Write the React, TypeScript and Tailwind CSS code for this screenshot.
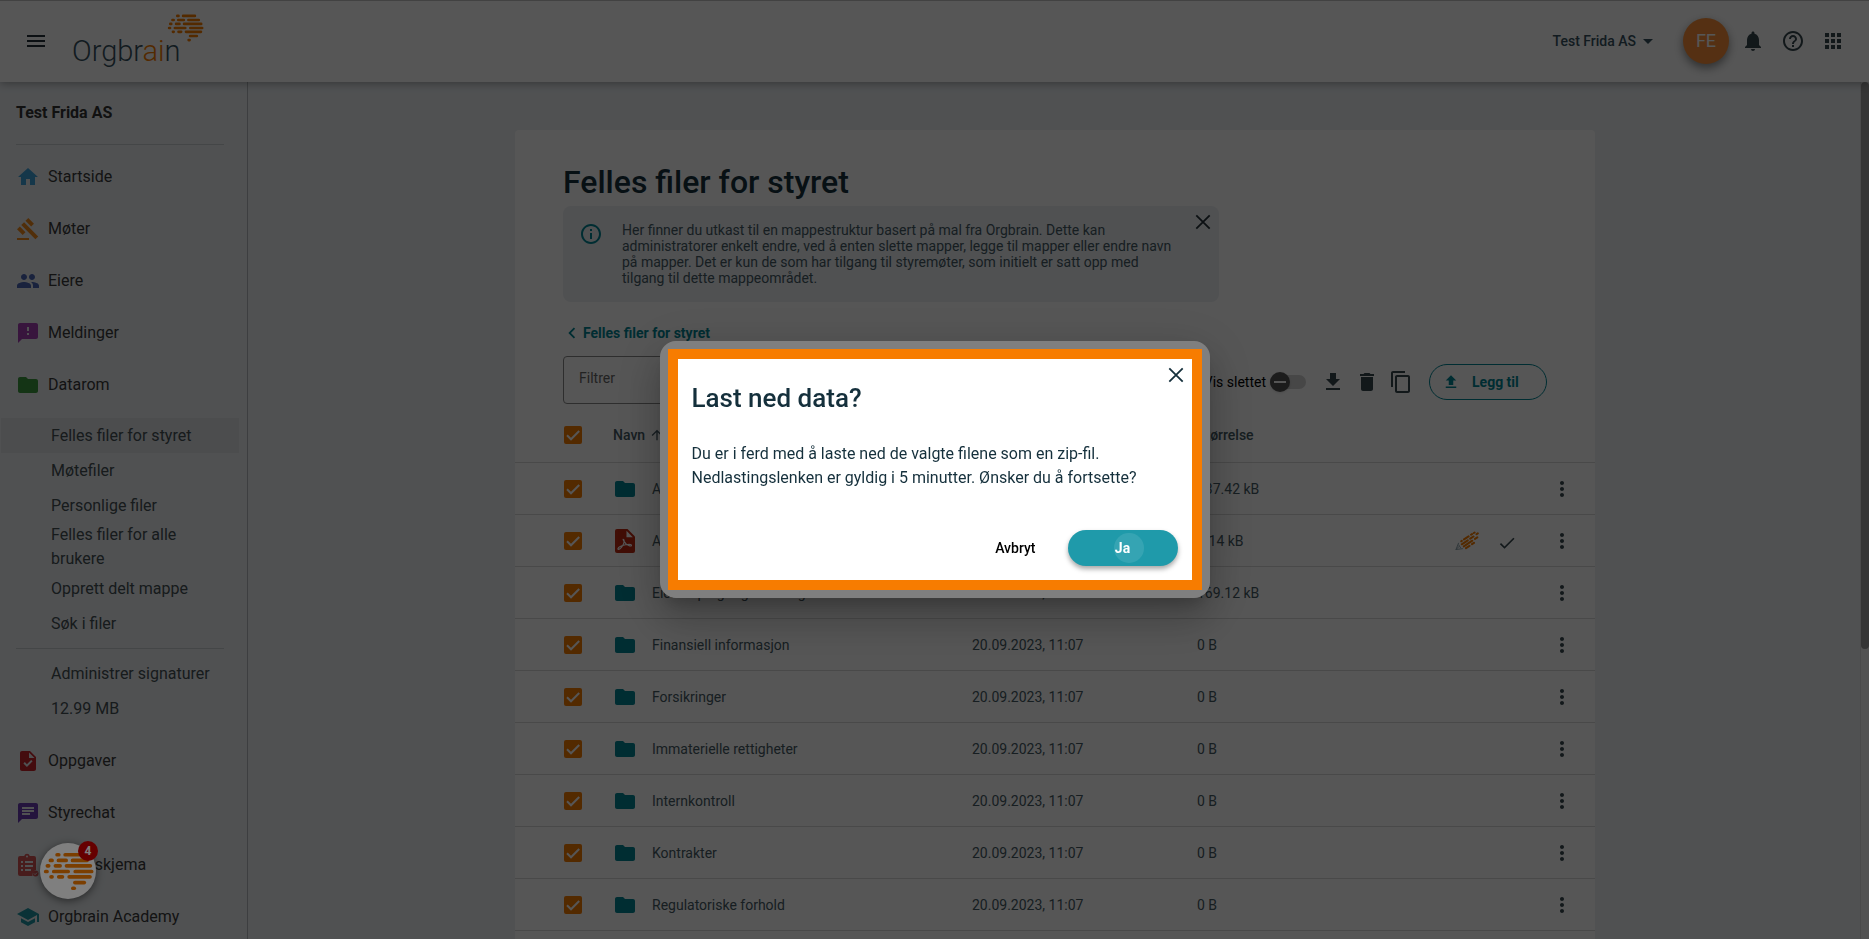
import type { ReactNode } from 'react';
import {
  MdApps,
  MdArrowDropDown,
  MdArrowUpward,
  MdChat,
  MdCheck,
  MdChevronLeft,
  MdContentCopy,
  MdDelete,
  MdFeedback,
  MdFileDownload,
  MdFileUpload,
  MdFolder,
  MdGavel,
  MdHelpOutline,
  MdHome,
  MdInfoOutline,
  MdMenu,
  MdMoreVert,
  MdNotifications,
  MdPeople,
  MdSchool,
  MdTask,
} from 'react-icons/md';

interface FileRow {
  name: string;
  type: 'folder' | 'pdf';
  date: string;
  size: string;
  signed?: boolean;
}

const files: FileRow[] = [
  { name: 'Ansatte', type: 'folder', date: '20.09.2023, 11:07', size: '137.42 kB' },
  { name: 'Avtale.pdf', type: 'pdf', date: '20.09.2023, 11:07', size: '1.14 kB', signed: true },
  { name: 'Eierskap og organisering', type: 'folder', date: '20.09.2023, 11:07', size: '169.12 kB' },
  { name: 'Finansiell informasjon', type: 'folder', date: '20.09.2023, 11:07', size: '0 B' },
  { name: 'Forsikringer', type: 'folder', date: '20.09.2023, 11:07', size: '0 B' },
  { name: 'Immaterielle rettigheter', type: 'folder', date: '20.09.2023, 11:07', size: '0 B' },
  { name: 'Internkontroll', type: 'folder', date: '20.09.2023, 11:07', size: '0 B' },
  { name: 'Kontrakter', type: 'folder', date: '20.09.2023, 11:07', size: '0 B' },
  { name: 'Regulatoriske forhold', type: 'folder', date: '20.09.2023, 11:07', size: '0 B' },
];

const dataroomLinks = [
  'Felles filer for styret',
  'Møtefiler',
  'Personlige filer',
  'Felles filer for alle brukere',
  'Opprett delt mappe',
  'Søk i filer',
];

const BrainMark = ({ className = '' }: { className?: string }) => (
  <svg viewBox="128 455 152 116" className={className} fill="none" stroke="#f77c00" strokeWidth="11" strokeLinecap="round" aria-hidden="true">
    <path d="M170 463h5M194 463h49" />
    <path d="M150 480h5M174 480h23M216 480h43" />
    <path d="M141 496h4M165 496h14M198 496h71" />
    <path d="M136 513h4M160 513h43M224 513h49" />
    <path d="M152 529h3M175 529h11M206 529h62" />
    <path d="M223 546h28" />
    <path d="M217 563h4" />
  </svg>
);

const CloseIcon = () => (
  <svg viewBox="0 0 24 24" className="size-6" fill="none" stroke="currentColor" strokeWidth="1.8" aria-hidden="true">
    <path d="M5.3 5.3l13.4 13.4M18.7 5.3L5.3 18.7" />
  </svg>
);

const FormIcon = () => (
  <svg viewBox="0 0 24 24" className="size-6" aria-hidden="true">
    <path fill="#d65555" d="M4 3h4.2a2.9 2.9 0 0 1 5.6 0H18a2 2 0 0 1 2 2v12a5 5 0 0 0-3.5 6H4a2 2 0 0 1-2-2V5a2 2 0 0 1 2-2z" />
    <circle cx="11" cy="3.6" r="1" fill="#ecf0f4" />
    <path stroke="#ecf0f4" strokeWidth="1.8" d="M5 9h2M5 13h2M5 17h2M9 9h8M9 13h8M9 17h6" />
    <circle cx="19.5" cy="20.5" r="3" fill="#d65555" />
    <path d="M18 20.5l1.1 1.1 2-2" fill="none" stroke="#ecf0f4" strokeWidth="0.9" />
  </svg>
);

const PdfIcon = () => (
  <svg viewBox="0 0 20 24" className="h-6 w-5" aria-hidden="true">
    <path fill="#c22a12" d="M2 0h10.5L20 7.5V22a2 2 0 0 1-2 2H2a2 2 0 0 1-2-2V2a2 2 0 0 1 2-2z" />
    <path fill="#fff" d="M11.5 1.8v6.4h6.3z" />
    <path
      fill="none"
      stroke="#fff"
      strokeWidth="1.1"
      d="M8.3 10.2c1 0 1 2.2.5 4-.7 2.4-3.4 6-5.1 6.2-1.5.1-.9-1.7 1.5-2.9 2.6-1.3 8.3-2.6 10.3-2 1.8.6.9 1.9-.8 1.4-2.1-.6-4.7-2.5-5.9-4.8-.6-1.2-.9-2-.5-1.9z"
    />
  </svg>
);

const SignIcon = () => (
  <svg viewBox="0 0 24 20" className="h-5 w-6" fill="none" strokeLinecap="round" aria-hidden="true">
    <path
      stroke="#f77c00"
      strokeWidth="2"
      d="M6.2 10.3l.6-.4M9 8.400l4.600-3M16 3.800l1-.7M6.800 13.300l6-4M15.200 7.700l3.300-2.200M21.500 3.300l1.300-.9M8.800 15.400l8.500-5.700M20 7.900l2.300-1.500M11 17.200l3.500-2.300M17 13.200l2-1.300M18.800 2l.8-.5"
    />
    <path stroke="#90a4ae" strokeWidth="1" d="M3.5 12.2L1 18.500l6.500-.8M3.800 14l1.700 2.700M1 18.500l3-3" />
  </svg>
);

interface NavItemProps {
  icon: ReactNode;
  label: string;
}

const NavItem = ({ icon, label }: NavItemProps) => (
  <a href="#" className="flex h-[52px] items-center gap-2 px-4 pt-0.5 text-base text-[#3a3a3a]">
    {icon}
    <span>{label}</span>
  </a>
);

const Checkbox = ({ label }: { label: string }) => (
  <span className="relative block size-[18px]">
    <input type="checkbox" defaultChecked aria-label={label} className="block size-[18px] appearance-none rounded-xs bg-[#f77c00]" />
    <svg viewBox="0 0 18 18" className="pointer-events-none absolute inset-0" fill="none" stroke="#fff" strokeWidth="2" aria-hidden="true">
      <path d="M3 9.3l4 4L15.2 5" />
    </svg>
  </span>
);

const Header = () => (
  <header className="relative z-10 flex h-[82px] shrink-0 items-center justify-between border-t border-[#c4c4c4] bg-white px-6 pb-0.5 shadow-[0_2px_8px_rgba(0,0,0,0.3)]">
    <div className="flex items-center gap-6">
      <button type="button" aria-label="Meny" className="text-[#263238]">
        <MdMenu className="size-6" />
      </button>
      <a href="#" aria-label="Orgbrain" className="relative block pt-5 text-[29px] leading-8 font-light text-[#37525f]">
        Orgbr<span className="text-[#f77c00]">ai</span>n
        <BrainMark className="absolute -top-px left-[95px] h-7 w-[37px]" />
      </a>
    </div>
    <div className="flex items-center gap-4">
      <button type="button" className="mr-[7px] flex items-center text-sm font-medium text-[#37525f]">
        Test Frida AS
        <MdArrowDropDown className="size-6" />
      </button>
      <button type="button" className="size-[46px] rounded-full bg-[#fb9038] text-lg text-white shadow-[0_4px_10px_rgba(0,0,0,0.45)]">
        FE
      </button>
      <button type="button" aria-label="Varsler" className="-ml-1 text-[#37474f]">
        <MdNotifications className="size-6" />
      </button>
      <button type="button" aria-label="Hjelp" className="text-[#37474f]">
        <MdHelpOutline className="size-6" />
      </button>
      <button type="button" aria-label="Apper" className="text-[#37474f]">
        <MdApps className="size-6" />
      </button>
    </div>
  </header>
);

const Sidebar = () => (
  <aside className="w-[248px] shrink-0 overflow-hidden border-r border-[#b4b9bd]">
    <p className="px-4 pt-[19px] pb-[19px] text-base leading-6 font-bold text-[#333]">Test Frida AS</p>
    <hr className="mr-[23px] mb-[5px] ml-4 border-[#cbd0d3]" />
    <nav>
      <NavItem icon={<MdHome className="size-6 text-[#3fa2dc]" />} label="Startside" />
      <NavItem icon={<MdGavel className="size-6 text-[#f08a1d]" />} label="Møter" />
      <NavItem icon={<MdPeople className="size-6 text-[#4a66b5]" />} label="Eiere" />
      <NavItem icon={<MdFeedback className="size-6 text-[#a63fb5]" />} label="Meldinger" />
      <NavItem icon={<MdFolder className="size-6 text-[#3d9a40]" />} label="Datarom" />
      <div className="py-2 text-base leading-6 text-[#455055]">
        {dataroomLinks.map((link, i) => (
          <a
            key={link}
            href="#"
            className={`mr-2 ml-px flex min-h-[35px] items-center pr-10 pl-[50px] ${i === 0 ? 'bg-[#e0e4e8]' : ''}`}
          >
            {link}
          </a>
        ))}
        <hr className="my-[7px] mr-[23px] ml-4 border-[#cbd0d3]" />
        <a href="#" className="flex h-[35px] items-center pl-[51px]">
          Administrer signaturer
        </a>
        <p className="flex h-[35px] items-center pl-[51px]">12.99 MB</p>
      </div>
      <NavItem icon={<MdTask className="size-6 text-[#c9252c]" />} label="Oppgaver" />
      <NavItem icon={<MdChat className="size-6 text-[#6a3db5]" />} label="Styrechat" />
      <NavItem icon={<FormIcon />} label="Spørreskjema" />
      <NavItem icon={<MdSchool className="size-6 text-[#2095a3]" />} label="Orgbrain Academy" />
    </nav>
  </aside>
);

const Toolbar = () => (
  <div className="mt-3 flex items-center justify-between px-12">
    <input
      type="text"
      placeholder="Filtrer"
      aria-label="Filtrer"
      className="h-12 w-[320px] rounded-sm border border-[#8a8a8a] px-[15px] pb-1 text-sm placeholder:text-[#666]"
    />
    <div className="mt-1 flex items-center text-[#37474f]">
      <label className="flex items-center gap-1 text-sm text-black">
        Vis slettet
        <input type="checkbox" role="switch" className="sr-only" />
        <span className="flex h-3.5 w-9 items-center rounded-full bg-[#d2d2d2]">
          <span className="flex size-5 shrink-0 items-center justify-center rounded-full bg-[#555] shadow-sm">
            <span className="h-0.5 w-3 bg-white" />
          </span>
        </span>
      </label>
      <div className="mr-4 ml-[15px] flex gap-2.5">
        <button type="button" aria-label="Last ned">
          <MdFileDownload className="size-6" />
        </button>
        <button type="button" aria-label="Slett">
          <MdDelete className="size-6" />
        </button>
        <button type="button" aria-label="Kopier">
          <MdContentCopy className="size-6" />
        </button>
      </div>
      <button type="button" className="flex h-9 w-[118px] items-center gap-3 rounded-full border border-[#008594] pl-3 text-sm font-bold text-[#008594]">
        <MdFileUpload className="size-[18px]" />
        Legg til
      </button>
    </div>
  </div>
);

const FileTable = () => (
  <table className="mt-1 w-full table-fixed border-separate border-spacing-0 text-left text-sm text-[#455a64]">
    <thead>
      <tr className="h-[55px]">
        <th className="w-[98px] border-b border-[#d9d9d9] pl-[49px]">
          <Checkbox label="Velg alle" />
        </th>
        <th className="w-[359px] border-b border-[#d9d9d9] font-medium">
          <span className="flex items-center gap-1">
            Navn <MdArrowUpward className="size-4" />
          </span>
        </th>
        <th className="w-[225px] border-b border-[#d9d9d9] font-medium">Endret</th>
        <th className="border-b border-[#d9d9d9] font-medium">Størrelse</th>
        <th className="w-[110px] border-b border-[#d9d9d9]" />
        <th className="w-[45px] border-b border-[#d9d9d9]" />
      </tr>
    </thead>
    <tbody>
      {files.map((file) => (
        <tr key={file.name} className="h-[52px]">
          <td className="border-b border-[#d9d9d9] pl-[49px]">
            <Checkbox label={file.name} />
          </td>
          <td className="border-b border-[#d9d9d9]">
            <span className="flex items-center gap-[15px]">
              <span className="flex w-6 justify-center">
                {file.type === 'folder' ? <MdFolder className="size-6 text-[#008594]" /> : <PdfIcon />}
              </span>
              {file.name}
            </span>
          </td>
          <td className="border-b border-[#d9d9d9]">{file.date}</td>
          <td className="border-b border-[#d9d9d9]">{file.size}</td>
          <td className="border-b border-[#d9d9d9]">
            {file.signed && (
              <span className="flex items-center gap-[18px] pl-[15px]">
                <SignIcon />
                <MdCheck className="mt-1 size-5 text-[#37474f]" />
              </span>
            )}
          </td>
          <td className="border-b border-[#d9d9d9]">
            <button type="button" aria-label={`Valg for ${file.name}`} className="block text-[#37474f]">
              <MdMoreVert className="size-6" />
            </button>
          </td>
        </tr>
      ))}
    </tbody>
  </table>
);

const DownloadDialog = () => (
  <div className="fixed inset-0 z-40 flex items-center justify-center overflow-hidden">
    <div
      role="dialog"
      aria-modal="true"
      aria-labelledby="dialog-title"
      className="w-[550px] rounded-2xl bg-white p-2 shadow-[0_11px_15px_-7px_rgba(0,0,0,0.2),0_24px_38px_3px_rgba(0,0,0,0.14),0_9px_46px_8px_rgba(0,0,0,0.12)]"
    >
      {/* Highlight frame, dims everything outside it */}
      <div className="relative border-10 border-[#f77c00] bg-white px-3.5 pt-[23px] pb-3.5 text-[#15303c] shadow-[0_0_0_3000px_rgba(0,0,0,0.5)]">
        <button type="button" aria-label="Lukk" className="absolute top-1 right-1">
          <CloseIcon />
        </button>
        <h2 id="dialog-title" className="text-[26px] leading-8 font-medium">
          Last ned data?
        </h2>
        <p className="mt-7 text-base leading-6">
          Du er i ferd med å laste ned de valgte filene som en zip-fil. Nedlastingslenken er gyldig i 5 minutter. Ønsker du å fortsette?
        </p>
        <div className="mt-10 flex justify-end gap-4">
          <button type="button" className="px-4 text-sm font-medium text-black">
            Avbryt
          </button>
          <button
            type="button"
            className="relative h-9 w-[110px] rounded-full bg-[#1f9aaa] text-sm font-bold text-white shadow-[0_3px_5px_rgba(0,0,0,0.35)]"
          >
            <span className="absolute top-[3px] left-[46px] size-[30px] rounded-full bg-white/10" />
            Ja
          </button>
        </div>
      </div>
    </div>
  </div>
);

const ChatWidget = () => (
  <button
    type="button"
    aria-label="Åpne chat"
    className="fixed bottom-10 left-10 z-30 flex size-14 items-center justify-center rounded-full bg-white shadow-[0_2px_8px_rgba(0,0,0,0.5)]"
  >
    <BrainMark className="h-[39px] w-[51px]" />
    <span className="absolute -top-0.5 -right-0.5 flex size-5 items-center justify-center rounded-full bg-[#cc0000] text-xs font-bold text-white">
      4
    </span>
  </button>
);

export default function App() {
  return (
    <div className="flex h-screen flex-col overflow-hidden bg-[#ecf0f4] font-['Roboto',sans-serif]">
      <Header />
      <div className="relative flex min-h-0 flex-1">
        <Sidebar />
        <main className="min-w-0 flex-1 overflow-hidden pt-12 pr-[31px] pl-6">
          <div className="mx-auto min-h-full max-w-[1080px] rounded-sm bg-white pt-8 pb-8">
            <h1 className="px-12 text-[32px] leading-10 font-medium text-[#15303c]">Felles filer for styret</h1>
            <div className="relative mx-12 mt-1 flex max-w-[656px] rounded-lg bg-[#ecf0f4] py-4 pr-11 pl-4 text-sm leading-4 text-[#455a64]">
              <MdInfoOutline className="mr-[19px] size-6 shrink-0 text-[#008594]" />
              <p>
                Her finner du utkast til en mappestruktur basert på mal fra Orgbrain. Dette kan administratorer enkelt endre, ved å enten
                slette mapper, legge til mapper eller endre navn på mapper. Det er kun de som har tilgang til styremøter, som initielt er
                satt opp med tilgang til dette mappeområdet.
              </p>
              <button type="button" aria-label="Skjul melding" className="absolute top-1 right-1 text-[#263238]">
                <CloseIcon />
              </button>
            </div>
            <a href="#" className="mt-5 ml-12 flex w-fit items-center text-sm leading-[22px] font-bold text-[#008594]">
              <MdChevronLeft className="-ml-0.5 size-[22px]" />
              Felles filer for styret
            </a>
            <Toolbar />
            <FileTable />
          </div>
        </main>
        <div className="absolute inset-y-0 right-0 w-[9px] border-l border-[#dadada] bg-[#f2f2f2]">
          <div className="h-[567px] rounded-md bg-[#9c9c9c]" />
        </div>
      </div>
      <div className="fixed inset-0 z-20 bg-black/32" />
      <ChatWidget />
      <DownloadDialog />
    </div>
  );
}
